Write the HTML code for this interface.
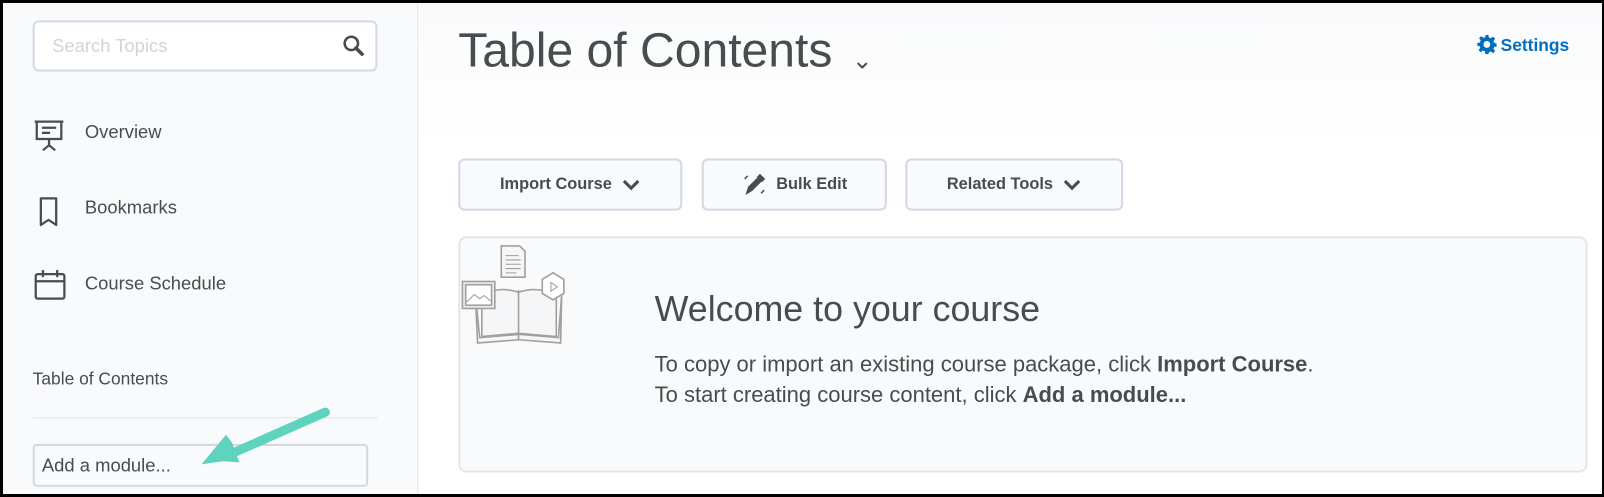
<!DOCTYPE html>
<html><head><style>
*{margin:0;padding:0;box-sizing:border-box}
body{width:1604px;height:497px;background:#000;font-family:"Liberation Sans",sans-serif;color:#494c4e;overflow:hidden;position:relative}
#frame{position:absolute;left:3px;top:3px;width:1599px;height:491px;background:#fff;overflow:hidden}
#inner{position:absolute;left:0;top:0;width:1563px;height:480px;transform:scale(1.0230);transform-origin:0 0}
#side{position:absolute;left:0;top:0;width:406px;height:480px;background:#f9fafb;border-right:1px solid #e3e6ea}
.search{position:absolute;left:29px;top:17px;width:337px;height:50px;background:#fff;border:2px solid #d3d9e3;border-radius:6px}
.search span{position:absolute;left:17px;top:13px;font-size:18px;color:#cdd5dc}
.nav{position:absolute;left:80px;font-size:18px;color:#494c4e}
.ico{position:absolute;left:28px}
.toc{position:absolute;left:29px;top:358px;font-size:17px}
.hr{position:absolute;left:29px;top:405px;width:337px;height:1px;background:#dfe3e8}
.add{position:absolute;left:29px;top:431px;width:328px;height:42px;border:2px solid #d3d9e3;border-radius:4px;background:#f9fafb;font-size:18px;padding:9px 0 0 7px}
#main{position:absolute;left:407px;top:0;right:0;height:480px;background:linear-gradient(#f9fafb,#fff 140px)}
h1{position:absolute;left:38px;top:18px;font-weight:normal;font-size:47px;color:#494c4e}
.settings{position:absolute;right:32px;top:31px;color:#006fbf;font-weight:bold;font-size:17px}
.btn{position:absolute;top:152px;height:51px;border:2px solid #d3d9e3;border-radius:6px;background:#f9fafb;font-weight:bold;font-size:16px;color:#494c4e;display:flex;align-items:center;justify-content:center;gap:10px}
.card{position:absolute;left:38px;top:228px;width:1104px;height:231px;border:2px solid #e3e6ea;border-radius:8px;background:#f9fafb}
.card h2{position:absolute;left:190px;top:50px;font-weight:normal;font-size:35px}
.card p{position:absolute;left:190px;font-size:21.5px}
</style></head><body>
<div id="frame"><div id="inner">
<div id="side">
 <div class="search"><span>Search Topics</span>
  <svg style="position:absolute;right:10px;top:12px" width="22" height="22" viewBox="0 0 22 22"><circle cx="8.5" cy="8.5" r="6.5" fill="none" stroke="#494c4e" stroke-width="2.5"/><path d="M13 13l6 6" stroke="#494c4e" stroke-width="3.5" stroke-linecap="round"/></svg></div>
 <svg class="ico" style="top:113px" width="34" height="34" viewBox="0 0 34 34" fill="none" stroke="#494c4e" stroke-width="2.2"><path d="M3 3h28M5 3v17h24V3M10 9h14M10 14h8M17 20v6M11 31l6-5 6 5"/></svg>
 <div class="nav" style="top:116px">Overview</div>
 <svg class="ico" style="top:188px" width="34" height="34" viewBox="0 0 34 34" fill="none" stroke="#494c4e" stroke-width="2.2" stroke-linejoin="round"><path d="M9 3h15v26l-7.5-5L9 29z"/></svg>
 <div class="nav" style="top:190px">Bookmarks</div>
 <svg class="ico" style="top:258px" width="34" height="34" viewBox="0 0 34 34" fill="none" stroke="#494c4e" stroke-width="2.2"><rect x="4" y="7" width="28" height="24" rx="2"/><path d="M4 14h28M11 3v7M25 3v7"/></svg>
 <div class="nav" style="top:264px">Course Schedule</div>
 <div class="toc">Table of Contents</div>
 <div class="hr"></div>
 <div class="add">Add a module...</div>
 <svg style="position:absolute;left:180px;top:392px" width="140" height="70" viewBox="0 0 140 70"><path d="M135 8L40 50" stroke="#5fd3bd" stroke-width="9" stroke-linecap="round"/><path d="M14 59L38 30 44 38 51 57 35 56z" fill="#5fd3bd"/></svg>
</div>
<div id="main">
 <h1>Table of Contents <span style="font-size:24px;vertical-align:-2px;margin-left:6px">&#8964;</span></h1>
 <div class="settings"><svg width="19" height="19" viewBox="0 0 20 20" style="vertical-align:-3px;margin-right:4px"><path fill="#006fbf" d="M8.5 0h3l.5 2.8 2 .9 2.4-1.7 2.1 2.1-1.7 2.4.9 2 2.8.5v3l-2.8.5-.9 2 1.7 2.4-2.1 2.1-2.4-1.7-2 .9-.5 2.8h-3L8 17.2l-2-.9-2.4 1.7-2.1-2.1 1.7-2.4-.9-2L0 11.5v-3l2.8-.5.9-2L2 3.6 4.1 1.5 6.5 3.2l2-.9zM10 6.5a3.5 3.5 0 100 7 3.5 3.5 0 000-7z"/></svg>Settings</div>
 <div class="btn" style="left:38px;width:219px">Import Course <svg width="18" height="12" viewBox="0 0 18 12"><path d="M2 2l7 7 7-7" fill="none" stroke="#494c4e" stroke-width="3"/></svg></div>
 <div class="btn" style="left:276px;width:181px"><svg width="24" height="24" viewBox="0 0 24 24"><path d="M5 20l2-6L16 5l3 3-9 9zM18 2l4 4-2 2-4-4zM3 6l3-3M19 20l3-3" fill="#494c4e" stroke="#494c4e" stroke-width="1.5"/></svg>Bulk Edit</div>
 <div class="btn" style="left:475px;width:213px">Related Tools <svg width="18" height="12" viewBox="0 0 18 12"><path d="M2 2l7 7 7-7" fill="none" stroke="#494c4e" stroke-width="3"/></svg></div>
 <div class="card">
  <svg style="position:absolute;left:0;top:4px" width="116" height="106" viewBox="0 0 110 100" fill="#f5f6f7" stroke="#a0a0a0" stroke-width="1.5">
   <path d="M38 3h17l5 5v24H38z"/><path d="M42 12h12M42 16h14M42 20h14M42 24h14M42 28h10" stroke-width="1"/>
   <path d="M14 48l2 45 38-3 39 3 1-45-3 40-36-3-37 3z"/><path d="M18 44h2v43l34-3 35 3V44" /><path d="M54 44v46"/><path d="M20 48q17-8 34-2q17-6 34 2" fill="none"/>
   <rect x="2" y="36" width="30" height="25" fill="#eee"/><rect x="5" y="39" width="24" height="19" fill="#fff"/><path d="M6 55l7-7 5 4 4-3 6 5" fill="none" stroke-width="1"/>
   <path d="M76 34l10-6 10 6v13l-10 6-10-6z" fill="#fff"/><path d="M84 37l6 4-6 4z" fill="none" stroke-width="1"/>
  </svg>
  <h2>Welcome to your course</h2>
  <p style="top:111px">To copy or import an existing course package, click <b>Import Course</b>.</p>
  <p style="top:141px">To start creating course content, click <b>Add a module...</b></p>
 </div>
</div>
</div></div>
</body></html>
